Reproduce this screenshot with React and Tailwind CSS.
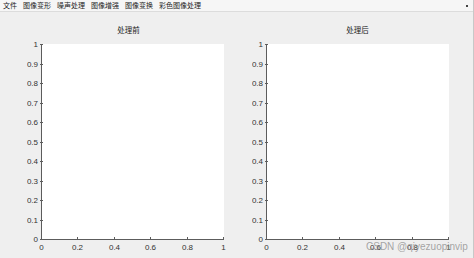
import React from "react";

const yTicks = [0, 0.1, 0.2, 0.3, 0.4, 0.5, 0.6, 0.7, 0.8, 0.9, 1];
const xTicks = [0, 0.2, 0.4, 0.6, 0.8, 1];
const menus = ["文件", "图像变形", "噪声处理", "图像增强", "图像变换", "彩色图像处理"];

// axes box inside svg
const X0 = 14;
const Y0 = 4;
const W = 183;
const H = 196;

function Axes() {
  return (
    <svg width="210" height="214" className="block" style={{ fontFamily: '"Liberation Sans", Arial, sans-serif' }}>
      <rect x={X0} y={Y0} width={W} height={H} fill="#ffffff" />
      <line x1={X0 + 0.5} y1={Y0} x2={X0 + 0.5} y2={Y0 + H} stroke="#5c5c5c" strokeWidth="1" />
      <line x1={X0} y1={Y0 + H - 0.5} x2={X0 + W} y2={Y0 + H - 0.5} stroke="#5c5c5c" strokeWidth="1" />
      {yTicks.map((t) => {
        const y = Math.round(Y0 + H - 1 - t * (H - 1)) + 0.5;
        return (
          <g key={t}>
            <line x1={X0 - 1} y1={y} x2={X0 + 2} y2={y} stroke="#5c5c5c" />
            <text x={X0 - 3} y={y + 2.5} fontSize="8" fill="#333" textAnchor="end">
              {t}
            </text>
          </g>
        );
      })}
      {xTicks.map((t) => {
        const x = Math.round(X0 + t * (W - 1)) + 0.5;
        return (
          <g key={t}>
            <line x1={x} y1={Y0 + H - 3} x2={x} y2={Y0 + H} stroke="#5c5c5c" />
            <text x={x} y={Y0 + H + 10} fontSize="8" fill="#333" textAnchor="middle">
              {t}
            </text>
          </g>
        );
      })}
    </svg>
  );
}

function Panel({ title, shift }) {
  return (
    <div className="flex flex-col w-[210px]">
      <div className={`${shift} w-[197px] text-center text-[7.5px] leading-[10px] text-[#222]`}>{title}</div>
      <div className="mt-[4px]">
        <Axes />
      </div>
    </div>
  );
}

export default function App() {
  return (
    <div
      className="relative w-[474px] h-[258px] bg-[#efefef] flex flex-col border-r border-[#c8c8c8] overflow-hidden"
      style={{ fontFamily: '"Liberation Sans", "Noto Sans CJK SC", sans-serif' }}
    >
      <div className="h-[12px] bg-[#f6f6f6] border-b border-[#dcdcdc] flex items-center pl-[3px] gap-[6px] text-[7px] leading-[10px] text-[#222]">
        {menus.map((m) => (
          <span key={m}>{m}</span>
        ))}
        <span className="ml-auto mr-[5px] w-[2px] h-[2px] bg-[#444]" />
      </div>
      <div className="flex pt-[14px] pl-[27px] gap-[15px]">
        <Panel title="处理前" shift="pl-[6px]" />
        <Panel title="处理后" shift="pl-[14px]" />
      </div>
      <div className="absolute left-[366px] top-[241px] whitespace-nowrap text-[10px] leading-[12px] text-[#8f8f8f]/80">
        CSDN @qiyezuopinvip
      </div>
    </div>
  );
}
